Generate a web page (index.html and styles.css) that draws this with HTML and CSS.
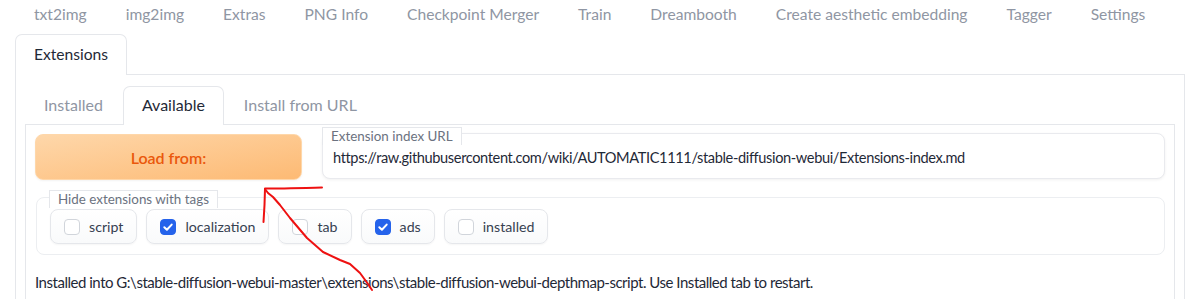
FILE: index.html
```html
<!DOCTYPE html>
<html>
<head>
<meta charset="utf-8">
<link rel="stylesheet" href="styles.css">
</head>
<body>
<div class="app">
  <div class="tabnav main-nav">
    <div class="tabrow">
      <div class="tab">txt2img</div>
      <div class="tab">img2img</div>
      <div class="tab">Extras</div>
      <div class="tab">PNG Info</div>
      <div class="tab">Checkpoint Merger</div>
      <div class="tab">Train</div>
      <div class="tab">Dreambooth</div>
      <div class="tab">Create aesthetic embedding</div>
      <div class="tab">Tagger</div>
      <div class="tab">Settings</div>
    </div>
    <div class="tabrow">
      <div class="tab selected">Extensions</div>
    </div>
  </div>
  <div class="panel outer">
    <div class="tabnav sub-nav">
      <div class="tabrow">
        <div class="tab">Installed</div>
        <div class="tab selected">Available</div>
        <div class="tab">Install from URL</div>
      </div>
    </div>
    <div class="panel inner">
      <div class="row">
        <button class="load-btn">Load from:</button>
        <div class="textbox">
          <span class="legend">Extension index URL</span>
          <div class="input">https://raw.githubusercontent.com/wiki/AUTOMATIC1111/stable-diffusion-webui/Extensions-index.md</div>
        </div>
      </div>
      <div class="group">
        <span class="legend group-legend">Hide extensions with tags</span>
        <div class="checks">
          <label class="check"><span class="box"></span>script</label>
          <label class="check"><span class="box on"><svg viewBox="0 0 16 16" width="16" height="16"><path d="M4.3 8.3 L6.9 10.8 L11.7 5.6" fill="none" stroke="#fff" stroke-width="2" stroke-linecap="round" stroke-linejoin="round"/></svg></span>localization</label>
          <label class="check"><span class="box"></span>tab</label>
          <label class="check"><span class="box on"><svg viewBox="0 0 16 16" width="16" height="16"><path d="M4.3 8.3 L6.9 10.8 L11.7 5.6" fill="none" stroke="#fff" stroke-width="2" stroke-linecap="round" stroke-linejoin="round"/></svg></span>ads</label>
          <label class="check"><span class="box"></span>installed</label>
        </div>
      </div>
      <p class="status">Installed into G:\stable-diffusion-webui-master\extensions\stable-diffusion-webui-depthmap-script. Use Installed tab to restart.</p>
    </div>
  </div>
</div>
<svg class="annot" width="1200" height="299" viewBox="0 0 1200 299">
  <path d="M322 187.5 C300 188 280 188.5 265 188.5" fill="none" stroke="#ee1111" stroke-width="2" stroke-linecap="round"/>
  <path d="M265 189 L264.5 205 L263.5 222" fill="none" stroke="#ee1111" stroke-width="2" stroke-linecap="round"/>
  <path d="M265 189 L268 193 L273 197 L280 205 L290 218 L307 238 L323 252 L340 260 L350 264 L360 273 L368 284 L372 290" fill="none" stroke="#ee1111" stroke-width="2" stroke-linecap="round" stroke-linejoin="round"/>
</svg>
</body>
</html>
```
FILE: styles.css
```css
* { box-sizing: border-box; }
html, body {
  margin: 0;
  padding: 0;
  background: #fff;
  overflow: hidden;
  height: 299px;
}
body {
  font-family: "Lato", "Noto Sans", sans-serif;
  color: #1f2937;
  position: relative;
}
.app {
  padding: 0 15px;
  margin-top: -6px;
}
.tabnav {
  border-bottom: 1px solid #e5e7eb;
}
.tabrow {
  display: flex;
  flex-wrap: nowrap;
}
.tab {
  font-size: 15.6px;
  color: #8f96a3;
  padding: 0 18px;
  height: 40px;
  line-height: 38px;
  border: 1px solid transparent;
  border-bottom: none;
  border-radius: 7px 7px 0 0;
  margin-right: 1px;
  white-space: nowrap;
}
.tab.selected {
  color: #1f2937;
  border-color: #e5e7eb;
  background: #fff;
  margin-bottom: -1px;
  height: 41px;
}
.sub-nav .tab {
  font-size: 16px;
  height: 38px;
  line-height: 35px;
}
.sub-nav .tab.selected {
  height: 39px;
}
.panel {
  border: 1px solid #e5e7eb;
  border-top: none;
}
.outer {
  padding: 11px 9px 30px;
}
.inner {
  padding: 9px 9px 30px;
}
.row {
  display: flex;
  gap: 18px;
  align-items: stretch;
}
.load-btn {
  width: 267px;
  height: 46px;
  flex: none;
  border: 1px solid #fed7aa;
  border-radius: 8px;
  background: linear-gradient(to bottom right, #fed7aa, #fdba74);
  color: #ea580c;
  font-family: inherit;
  font-size: 16px;
  font-weight: 600;
  box-shadow: 0 1px 2px rgba(0,0,0,0.05);
}
.textbox {
  flex: 1;
  position: relative;
  margin-top: -1px;
  border: 1px solid #e9eaee;
  border-radius: 8px;
  box-shadow: 0 1px 3px rgba(0,0,0,0.06);
  background: #fff;
  height: 46px;
  display: flex;
  align-items: center;
  margin-left: 2px;
}
.legend {
  position: absolute;
  background: #fff;
  border: 1px solid #e5e7eb;
  border-bottom: none;
  font-size: 13.4px;
  color: #6b7280;
  padding: 0 8px;
  line-height: 17px;
}
.textbox .legend {
  top: -7px;
  left: -1px;
}
.input {
  font-size: 14.6px;
  letter-spacing: -0.38px;
  color: #1f2937;
  padding-left: 10px;
  padding-top: 2px;
}
.group {
  position: relative;
  margin-top: 17px;
  margin-left: 1px;
  border: 1px solid #eceef1;
  border-radius: 8px;
  padding: 11px 13px 10px;
}
.group-legend {
  top: -8px;
  left: 12px;
}
.checks {
  display: flex;
  gap: 9px;
}
.check {
  display: flex;
  align-items: center;
  gap: 9px;
  height: 35px;
  padding: 0 13px;
  border: 1px solid #e5e7eb;
  border-radius: 8px;
  background: linear-gradient(to bottom, #ffffff, #f9fafb);
  box-shadow: 0 1px 2px rgba(0,0,0,0.04);
  font-size: 14.2px;
  color: #374151;
}
.box {
  width: 16px;
  height: 16px;
  border: 1px solid #d1d5db;
  border-radius: 4px;
  background: #fff;
  display: block;
}
.box.on {
  background: #2563eb;
  border-color: #2563eb;
}
.box svg {
  display: block;
  margin: -1px;
}
.status {
  margin: 18px 0 0;
  font-size: 15px;
  letter-spacing: -0.48px;
  color: #1f2937;
}
.annot {
  position: absolute;
  top: 0;
  left: 0;
  pointer-events: none;
}
```
